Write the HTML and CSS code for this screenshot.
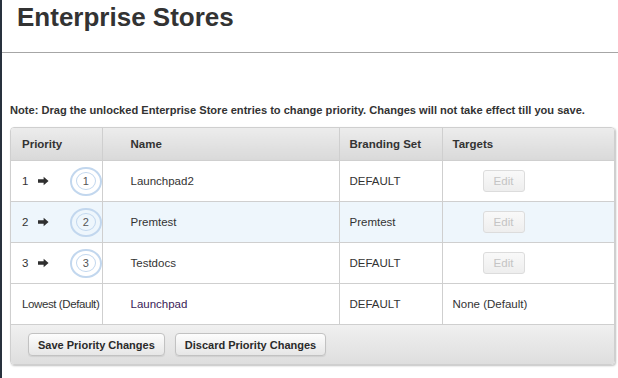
FILE: index.html
```html
<!DOCTYPE html>
<html lang="en">
<head>
    <meta charset="UTF-8">
    <title>Enterprise Stores</title>
    <link rel="stylesheet" href="styles.css">
</head>
<body>
    <div class="page">
        <header class="page-header">
            <h1>Enterprise Stores</h1>
        </header>

        <main class="content">
            <p class="note">Note: Drag the unlocked Enterprise Store entries to change priority. Changes will not take effect till you save.</p>

            <div class="store-box">
                <table class="store-table">
                    <colgroup>
                        <col class="w-priority">
                        <col class="w-name">
                        <col class="w-brand">
                        <col>
                    </colgroup>
                    <thead>
                        <tr>
                            <th>Priority</th>
                            <th class="col-name">Name</th>
                            <th>Branding Set</th>
                            <th>Targets</th>
                        </tr>
                    </thead>
                    <tbody>
                        <tr>
                            <td class="col-priority">
                                <div class="priority">
                                    <span class="num">1</span>
                                    <svg class="arrow" width="12" height="10" viewBox="0 0 12 10"><path d="M0 3.2h6.2V0.4L11.6 5 6.2 9.6V6.8H0z" fill="#2f2f2f"/></svg>
                                    <span class="badge"><span class="badge-inner">1</span></span>
                                </div>
                            </td>
                            <td class="col-name">Launchpad2</td>
                            <td>DEFAULT</td>
                            <td><button class="edit-btn" disabled>Edit</button></td>
                        </tr>
                        <tr class="alt">
                            <td class="col-priority">
                                <div class="priority">
                                    <span class="num">2</span>
                                    <svg class="arrow" width="12" height="10" viewBox="0 0 12 10"><path d="M0 3.2h6.2V0.4L11.6 5 6.2 9.6V6.8H0z" fill="#2f2f2f"/></svg>
                                    <span class="badge"><span class="badge-inner">2</span></span>
                                </div>
                            </td>
                            <td class="col-name">Premtest</td>
                            <td>Premtest</td>
                            <td><button class="edit-btn" disabled>Edit</button></td>
                        </tr>
                        <tr>
                            <td class="col-priority">
                                <div class="priority">
                                    <span class="num">3</span>
                                    <svg class="arrow" width="12" height="10" viewBox="0 0 12 10"><path d="M0 3.2h6.2V0.4L11.6 5 6.2 9.6V6.8H0z" fill="#2f2f2f"/></svg>
                                    <span class="badge"><span class="badge-inner">3</span></span>
                                </div>
                            </td>
                            <td class="col-name">Testdocs</td>
                            <td>DEFAULT</td>
                            <td><button class="edit-btn" disabled>Edit</button></td>
                        </tr>
                        <tr>
                            <td class="col-priority lowest">Lowest (Default)</td>
                            <td class="col-name"><span class="store-link">Launchpad</span></td>
                            <td>DEFAULT</td>
                            <td>None (Default)</td>
                        </tr>
                    </tbody>
                </table>
                <div class="table-footer">
                    <button class="btn">Save Priority Changes</button>
                    <button class="btn">Discard Priority Changes</button>
                </div>
            </div>
        </main>
    </div>
</body>
</html>
```

FILE: styles.css
```css
:root {
    --text-color: #333;
    --border-color: #cfcfcf;
    --ring-color: #c2d7ee;
    --radius: 4px;
}

body {
    margin: 0;
    font-family: "Liberation Sans", Arial, sans-serif;
    color: var(--text-color);
    background: #fff;
}

.page {
    border-left: 2px solid #28313d;
    min-height: 378px;
    box-sizing: border-box;
}

.page-header {
    height: 53px;
    border-bottom: 1px solid #a6a6a6;
    box-sizing: border-box;
}

.page-header h1 {
    margin: 0;
    padding: 2px 0 0 15px;
    font-size: 26px;
    line-height: 30px;
    font-weight: bold;
    color: #333;
}

.content {
    padding: 0 4px 0 8px;
}

.note {
    margin: 0;
    padding-top: 50px;
    font-size: 11.1px;
    line-height: 14px;
    font-weight: bold;
    color: #333;
}

.store-box {
    margin-top: 10px;
    width: 603px;
    border: 1px solid var(--border-color);
    border-radius: var(--radius);
    box-shadow: 1px 1px 2px rgba(0, 0, 0, 0.25);
    overflow: hidden;
}

.store-table {
    width: 100%;
    table-layout: fixed;
    border-collapse: collapse;
    font-size: 11.5px;
}

.w-priority {
    width: 91px;
}

.w-name {
    width: 237px;
}

.w-brand {
    width: 103px;
}

.store-table th {
    height: 32px;
    padding: 0 0 0 10px;
    text-align: left;
    font-weight: bold;
    background: linear-gradient(#ececec, #d9d9d9);
    border-bottom: 1px solid var(--border-color);
    border-left: 1px solid var(--border-color);
}

.store-table td {
    height: 40px;
    padding: 0 0 0 10px;
    border-top: 1px solid var(--border-color);
    border-left: 1px solid var(--border-color);
    background: #fff;
    white-space: nowrap;
}

.store-table tr.alt td {
    background: #eef6fc;
}

.store-table th:first-child,
.store-table td:first-child {
    border-left: none;
    padding-left: 11px;
}

.store-table thead + tbody tr:first-child td {
    border-top: none;
}

.store-table .col-name {
    padding-left: 28px;
}

.lowest {
    letter-spacing: -0.4px;
}

.priority {
    display: flex;
    align-items: center;
}

.num {
    width: 18px;
}

.arrow {
    display: block;
}

.badge {
    margin-left: 21px;
    width: 30px;
    height: 25px;
    border: 2px solid var(--ring-color);
    border-radius: 50%;
    display: flex;
    align-items: center;
    justify-content: center;
}

.badge-inner {
    width: 18px;
    height: 16px;
    border: 1px solid var(--ring-color);
    border-radius: 50%;
    font-size: 11px;
    line-height: 17px;
    text-align: center;
    color: #555;
}

.edit-btn {
    margin-left: 30px;
    width: 42px;
    height: 22px;
    padding: 0;
    font-family: inherit;
    font-size: 11.5px;
    color: #c4c4c4;
    background: linear-gradient(#f9f9f9, #eeeeee);
    border: 1px solid #dcdcdc;
    border-radius: 3px;
}

.store-link {
    color: #3a2258;
}

.table-footer {
    height: 39px;
    border-top: 1px solid var(--border-color);
    background: linear-gradient(#f0f0f0, #dedede);
    display: flex;
    align-items: center;
    gap: 10px;
    padding-left: 17px;
}

.btn {
    height: 23px;
    padding: 0 9px;
    font-family: inherit;
    font-size: 11px;
    font-weight: bold;
    color: #2a2a2a;
    background: linear-gradient(#fdfdfd, #e6e6e6);
    border: 1px solid #c2c2c2;
    border-radius: 4px;
    box-shadow: 0 1px 1px rgba(0, 0, 0, 0.08);
}
```
